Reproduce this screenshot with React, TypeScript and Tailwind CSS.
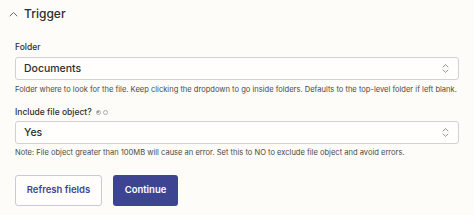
import React from "react";

function UpDown() {
  return (
    <svg width="9" height="11" viewBox="0 0 9 11" fill="none" stroke="#8a8986" strokeWidth="0.9" strokeLinecap="round" strokeLinejoin="round">
      <path d="M2 4 L4.5 1.6 L7 4" />
      <path d="M2 7 L4.5 9.4 L7 7" />
    </svg>
  );
}

function Select({ value }: { value: string }) {
  return (
    <div className="flex h-[23px] items-center justify-between rounded-[3px] border border-[#d3d1ce] bg-[#fffefc] pl-[8px] pr-[8px]">
      <span className="text-[10.5px] font-medium text-[#2d2e2e]">{value}</span>
      <UpDown />
    </div>
  );
}

export default function App() {
  return (
    <div className="h-[215px] w-[474px] overflow-hidden bg-[#fdfcf9] text-[#2d2e2e]" style={{ fontFamily: "Inter, 'Noto Sans', sans-serif" }}>
      <div className="flex h-[27px] items-center gap-[6px] pl-[9px]">
        <svg width="9" height="6" viewBox="0 0 9 6" fill="none" stroke="#666" strokeWidth="1" strokeLinecap="round" strokeLinejoin="round">
          <path d="M1 5 L4.5 1.5 L8 5" />
        </svg>
        <span className="text-[12px] font-medium">Trigger</span>
      </div>
      <div className="px-[15px] pt-[15px]">
        <div className="mb-[5px] text-[8.5px] font-medium leading-[10px]">Folder</div>
        <Select value="Documents" />
        <div className="mt-[5px] whitespace-nowrap text-[7.55px] leading-[10px] text-[#4a4a48]">
          Folder where to look for the file. Keep clicking the dropdown to go inside folders. Defaults to the top-level folder if left blank.
        </div>
        <div className="mt-[12px] mb-[4px] flex items-center gap-[4px] text-[8.5px] font-medium leading-[10px]">
          <span>Include file object?</span>
          <span className="flex items-center gap-[2px]">
            <span className="flex h-[5px] w-[5px] items-center justify-center rounded-full border border-[#aaa]">
              <span className="h-[2px] w-[2px] rounded-full bg-[#888]" />
            </span>
            <span className="h-[5px] w-[5px] rounded-full border border-[#aaa]" />
          </span>
        </div>
        <Select value="Yes" />
        <div className="mt-[4px] whitespace-nowrap text-[7.55px] leading-[10px] text-[#4a4a48]">
          Note: File object greater than 100MB will cause an error. Set this to NO to exclude file object and avoid errors.
        </div>
        <div className="mt-[17px] flex gap-[11px]">
          <button className="flex h-[31px] w-[87px] items-center justify-center rounded-[3px] border border-[#c9cad6] bg-[#fffefc] text-[9.5px] font-semibold text-[#3d4592]">
            Refresh fields
          </button>
          <button className="flex h-[31px] w-[65px] items-center justify-center rounded-[3px] bg-[#3d4592] text-[9.5px] font-semibold text-white">
            Continue
          </button>
        </div>
      </div>
    </div>
  );
}
